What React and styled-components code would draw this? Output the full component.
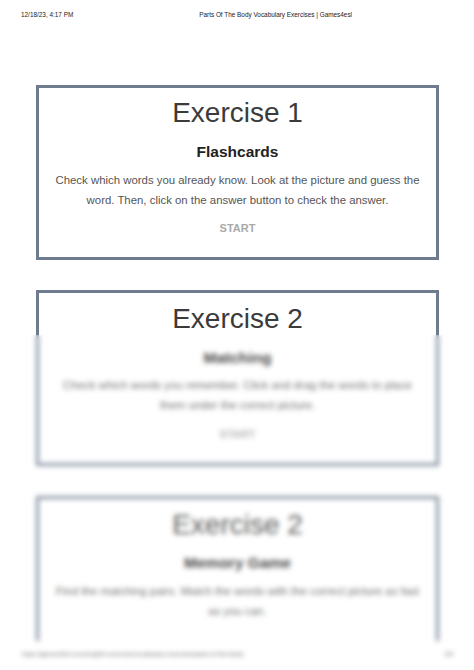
import React from "react";
import styled, { createGlobalStyle } from "styled-components";

const Global = createGlobalStyle`
  html, body { margin: 0; padding: 0; background: #fff; }
  body { font-family: "Liberation Sans", Arial, sans-serif; }
`;

const Page = styled.div`
  position: relative;
  width: 474px;
  height: 670px;
  overflow: hidden;
  background: #fff;
  display: flex;
  flex-direction: column;
`;

const Header = styled.header`
  display: flex;
  align-items: center;
  height: 30px;
  padding-left: 21px;
  font-size: 6.4px;
  color: #222;
`;

const HeaderTitle = styled.div`
  flex: 1;
  text-align: center;
  margin-right: -4px;
`;

const Content = styled.main`
  height: 615px;
  overflow: hidden;
  padding-top: 55px;
  box-sizing: border-box;
  display: flex;
  flex-direction: column;
  gap: 30px;
`;

const Card = styled.section`
  margin: 0 35px 0 36px;
  border: 3px solid #6f7b8e;
  padding: 8.5px 16px 22.4px;
  text-align: center;
  flex-shrink: 0;
`;

const Title = styled.h2`
  margin: 0;
  font-size: 28px;
  line-height: 1.2;
  font-weight: 400;
  color: #3b3b3b;
`;

const Subtitle = styled.h3`
  margin: 13px 0 0;
  font-size: 15.5px;
  line-height: 1.2;
  font-weight: 700;
  color: #222;
`;

const Text = styled.p`
  margin: 8px 0 0;
  font-size: 11.4px;
  line-height: 20px;
  color: #555;
`;

const Start = styled.div`
  margin-top: 12.4px;
  font-size: 11px;
  line-height: 1.2;
  font-weight: 700;
  color: #aaa;
`;

const Footer = styled.footer`
  display: flex;
  align-items: center;
  justify-content: space-between;
  height: 25px;
  padding: 0 21px 4px 22px;
  font-size: 6.2px;
  color: #333;
`;

const BlurVeil = styled.div`
  position: absolute;
  left: 0;
  right: 0;
  top: 335px;
  bottom: 0;
  backdrop-filter: blur(2.9px);
  -webkit-backdrop-filter: blur(2.9px);
  background: rgba(255, 255, 255, 0.18);
`;

const exercises = [
  {
    title: "Exercise 1",
    name: "Flashcards",
    text: "Check which words you already know. Look at the picture and guess the word. Then, click on the answer button to check the answer.",
    start: true,
  },
  {
    title: "Exercise 2",
    name: "Matching",
    text: "Check which words you remember. Click and drag the words to place them under the correct picture.",
    start: true,
  },
  {
    title: "Exercise 2",
    name: "Memory Game",
    text: "Find the matching pairs. Match the words with the correct picture as fast as you can.",
    start: false,
  },
];

export default function App() {
  return (
    <>
      <Global />
      <Page>
        <Header>
          <span>12/18/23, 4:17 PM</span>
          <HeaderTitle>Parts Of The Body Vocabulary Exercises | Games4esl</HeaderTitle>
        </Header>
        <Content>
          {exercises.map((ex, i) => (
            <Card key={i}>
              <Title>{ex.title}</Title>
              <Subtitle>{ex.name}</Subtitle>
              <Text>{ex.text}</Text>
              {ex.start && <Start>START</Start>}
            </Card>
          ))}
        </Content>
        <Footer>
          <span>https://games4esl.com/english-exercises/vocabulary-exercises/parts-of-the-body/</span>
          <span>2/4</span>
        </Footer>
        <BlurVeil />
      </Page>
    </>
  );
}
